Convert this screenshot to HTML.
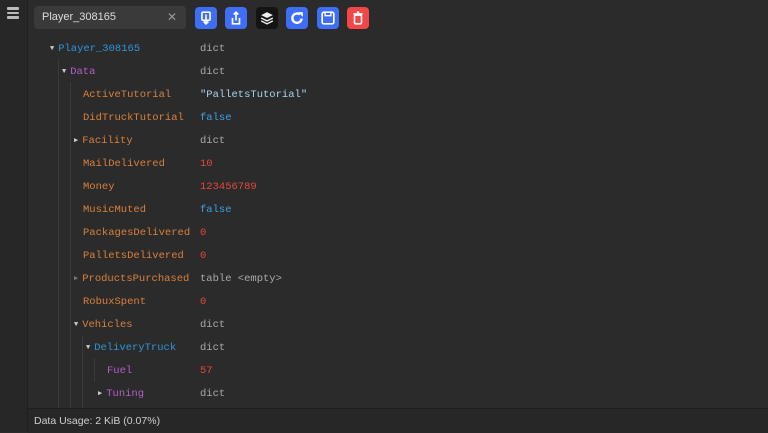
<!DOCTYPE html>
<html><head><meta charset="utf-8"><style>
html,body{margin:0;padding:0;width:768px;height:432px;overflow:hidden;background:#2b2b2b;font-family:"Liberation Sans",sans-serif}
.side{position:absolute;left:0;top:0;width:27px;height:432px;background:#272727;border-right:1px solid #1f1f1f}
.ham{position:absolute;left:7px;top:7px;width:12px}
.ham div{height:2.5px;background:#bbb;margin-bottom:2px;border-radius:1px}
.search{position:absolute;left:34px;top:6px;width:152px;height:23px;background:#3a3a3a;border-radius:4px;color:#ddd;font-size:11px;line-height:23px;padding-left:8px;box-sizing:border-box}
.search span{position:absolute;right:9px;top:0;color:#999;font-size:12px}
.btn{position:absolute;top:7px;width:22px;height:22px;border-radius:4px;background:#3d6ef5}
.btn svg{position:absolute;left:4px;top:4px}
.row{position:absolute;font-family:"Liberation Mono","DejaVu Sans Mono",monospace;font-size:10.5px;line-height:14px;white-space:nowrap}
.v{position:absolute;left:200px;font-family:"Liberation Mono","DejaVu Sans Mono",monospace;font-size:10.5px;line-height:14px;white-space:nowrap}
.tri{font-size:7px;color:#ccc;margin-right:4px;margin-left:1px;vertical-align:1px}
.b{color:#2f95d6}.p{color:#b55ec9}.o{color:#d9803c}.g{color:#aaa}.s{color:#a8d4ef}.f{color:#3aa0e6}.n{color:#e5473e}
.gl{position:absolute;width:1px;background:#3a3a3a}
.foot{position:absolute;left:28px;top:408px;width:740px;height:24px;background:#272727;border-top:1px solid #1f1f1f;color:#cfcfcf;font-size:10.5px;line-height:24px;padding-left:6px}
</style></head><body>
<div class="side"><div class="ham"><div></div><div></div><div></div></div></div>
<div class="search">Player_308165<span>✕</span></div>
<div class="btn" style="left:195px"><svg width="14" height="14" viewBox="0 0 12 12"><rect x="2.5" y="1" width="7" height="7" rx="1" fill="none" stroke="#fff" stroke-width="1.4"/><path d="M6 3v8M4 9l2 2 2-2" stroke="#fff" stroke-width="1.4" fill="none"/></svg></div>
<div class="btn" style="left:225px"><svg width="14" height="14" viewBox="0 0 12 12"><path d="M3 6v5h6V6" stroke="#fff" stroke-width="1.4" fill="none"/><path d="M6 8V1M4 3l2-2 2 2" stroke="#fff" stroke-width="1.4" fill="none"/></svg></div>
<div class="btn" style="left:256px;background:#141414"><svg width="14" height="14" viewBox="0 0 12 12"><path d="M6 1l5 2.5-5 2.5-5-2.5z" fill="#eee"/><path d="M1 6l5 2.5L11 6M1 8.5L6 11l5-2.5" stroke="#eee" stroke-width="1.2" fill="none"/></svg></div>
<div class="btn" style="left:286px"><svg width="14" height="14" viewBox="0 0 12 12"><path d="M10 6.5A4 4 0 1 1 8.5 3" stroke="#fff" stroke-width="2" fill="none"/><path d="M7 1h4v4z" fill="#fff"/></svg></div>
<div class="btn" style="left:317px"><svg width="14" height="14" viewBox="0 0 12 12"><rect x="1" y="1" width="10" height="10" rx="1.5" fill="none" stroke="#fff" stroke-width="1.4"/><path d="M3.5 1v3h5V1" stroke="#fff" stroke-width="1.2" fill="none"/></svg></div>
<div class="btn" style="left:347px;background:#f04848"><svg width="14" height="14" viewBox="0 0 12 12"><path d="M2 2.5h8" stroke="#fff" stroke-width="1.3"/><rect x="3" y="3.5" width="6" height="7.5" rx="1" fill="none" stroke="#fff" stroke-width="1.3"/><path d="M5 1h2" stroke="#fff" stroke-width="1.3"/></svg></div>

<div class="gl" style="left:58px;top:59px;height:349px"></div>
<div class="gl" style="left:70px;top:82px;height:326px"></div>
<div class="gl" style="left:82px;top:335px;height:73px"></div>
<div class="gl" style="left:94px;top:358px;height:24px"></div>

<div class="row" style="left:49px;top:42px"><span class="tri">▼</span><span class="b">Player_308165</span></div><div class="v g" style="top:42px">dict</div>
<div class="row" style="left:61px;top:65px"><span class="tri">▼</span><span class="p">Data</span></div><div class="v g" style="top:65px">dict</div>
<div class="row o" style="left:83px;top:88px">ActiveTutorial</div><div class="v s" style="top:88px">"PalletsTutorial"</div>
<div class="row o" style="left:83px;top:111px">DidTruckTutorial</div><div class="v f" style="top:111px">false</div>
<div class="row" style="left:73px;top:134px"><span class="tri">▶</span><span class="o">Facility</span></div><div class="v g" style="top:134px">dict</div>
<div class="row o" style="left:83px;top:157px">MailDelivered</div><div class="v n" style="top:157px">10</div>
<div class="row o" style="left:83px;top:180px">Money</div><div class="v n" style="top:180px">123456789</div>
<div class="row o" style="left:83px;top:203px">MusicMuted</div><div class="v f" style="top:203px">false</div>
<div class="row o" style="left:83px;top:226px">PackagesDelivered</div><div class="v n" style="top:226px">0</div>
<div class="row o" style="left:83px;top:249px">PalletsDelivered</div><div class="v n" style="top:249px">0</div>
<div class="row" style="left:73px;top:272px"><span class="tri" style="color:#777">▶</span><span class="o">ProductsPurchased</span></div><div class="v g" style="top:272px">table &lt;empty&gt;</div>
<div class="row o" style="left:83px;top:295px">RobuxSpent</div><div class="v n" style="top:295px">0</div>
<div class="row" style="left:73px;top:318px"><span class="tri">▼</span><span class="o">Vehicles</span></div><div class="v g" style="top:318px">dict</div>
<div class="row" style="left:85px;top:341px"><span class="tri">▼</span><span class="b">DeliveryTruck</span></div><div class="v g" style="top:341px">dict</div>
<div class="row p" style="left:107px;top:364px">Fuel</div><div class="v n" style="top:364px">57</div>
<div class="row" style="left:97px;top:387px"><span class="tri">▶</span><span class="p">Tuning</span></div><div class="v g" style="top:387px">dict</div>

<div class="foot">Data Usage: 2 KiB (0.07%)</div>
</body></html>
